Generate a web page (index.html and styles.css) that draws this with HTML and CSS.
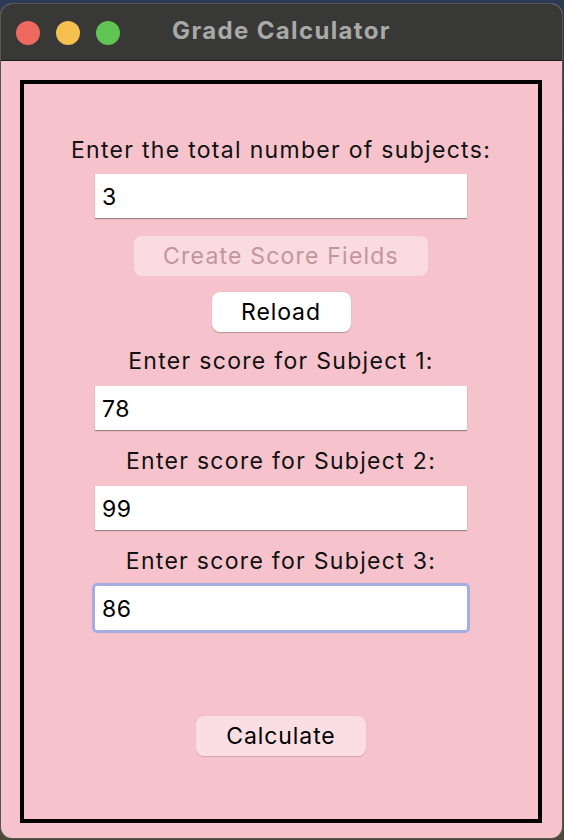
FILE: index.html
```html
<!DOCTYPE html>
<html>
<head>
<meta charset="utf-8">
<link rel="stylesheet" href="styles.css">
</head>
<body>
<div class="desktop">
  <div class="window">
    <div class="titlebar">
      <div class="lights">
        <span class="light red"></span>
        <span class="light yellow"></span>
        <span class="light green"></span>
      </div>
      <div class="title">Grade Calculator</div>
    </div>
    <div class="content">
      <div class="frame">
        <div class="label l1">Enter the total number of subjects:</div>
        <div class="field f1">3</div>
        <div class="btn btn-disabled">Create Score Fields</div>
        <div class="btn btn-white">Reload</div>
        <div class="label l2">Enter score for Subject 1:</div>
        <div class="field f2">78</div>
        <div class="label l3">Enter score for Subject 2:</div>
        <div class="field f2">99</div>
        <div class="label l3">Enter score for Subject 3:</div>
        <div class="field f3 focused">86</div>
        <div class="btn btn-calc">Calculate</div>
      </div>
    </div>
  </div>
</div>
</body>
</html>
```
FILE: styles.css
```css
html, body {
  margin: 0;
  padding: 0;
}
body {
  width: 564px;
  height: 840px;
  overflow: hidden;
  font-family: Inter, "Liberation Sans", sans-serif;
}
.desktop {
  width: 564px;
  height: 840px;
  background: linear-gradient(180deg, #2c3b55 0%, #3a4660 40%, #4a4a36 100%);
  padding-top: 4px;
  padding-left: 1px;
  box-sizing: border-box;
}
.window {
  width: 561px;
  height: 834px;
  border-radius: 11px;
  overflow: hidden;
  background: #f6c3cc;
  box-shadow: 0 0 0 1px #555;
}
.titlebar {
  height: 56px;
  background: #383836;
  border-bottom: 1px solid #1c1c1c;
  display: flex;
  align-items: center;
  position: relative;
}
.lights {
  display: flex;
  gap: 16px;
  padding-left: 15px;
  margin-top: 1px;
}
.light {
  width: 24px;
  height: 24px;
  border-radius: 50%;
  display: block;
}
.red { background: #ee6a5f; }
.yellow { background: #f5c04f; }
.green { background: #61c554; }
.title {
  position: absolute;
  left: 0;
  right: 0;
  top: 0;
  height: 56px;
  line-height: 54px;
  text-align: center;
  color: #a9a9a7;
  font-weight: 700;
  font-size: 24px;
  letter-spacing: 1.35px;
}
.content {
  padding: 19px 0 0 19px;
}
.frame {
  width: 522px;
  height: 743px;
  border: 4px solid #000;
  display: flex;
  flex-direction: column;
  align-items: center;
  padding-top: 51px;
  box-sizing: border-box;
}
.label {
  height: 30px;
  line-height: 30px;
  font-size: 23px;
  letter-spacing: 1.3px;
  color: #111;
  white-space: nowrap;
}
.field {
  width: 372px;
  height: 44px;
  background: #fff;
  box-shadow: 0 1px 1px rgba(0,0,0,0.35);
  font-size: 23px;
  line-height: 46px;
  padding-left: 7px;
  box-sizing: border-box;
  color: #000;
  letter-spacing: 0.6px;
}
.f1 { margin-top: 9px; }
.l2 { margin-top: 14px; }
.l3 { margin-top: 16px; }
.f2, .f3 { margin-top: 10px; }
.focused {
  border-radius: 2px;
  box-shadow: 0 0 0 3px #a3aee2, 0 1px 1px rgba(0,0,0,0.3);
}
.btn {
  height: 40px;
  line-height: 40px;
  border-radius: 8px;
  font-size: 23px;
  letter-spacing: 0.9px;
  text-align: center;
  box-sizing: border-box;
  white-space: nowrap;
}
.btn-disabled {
  margin-top: 18px;
  width: 294px;
  background: #f9dbe1;
  color: #c4959d;
  letter-spacing: 1.2px;
}
.btn-white {
  margin-top: 16px;
  width: 139px;
  background: #fff;
  color: #000;
  box-shadow: 0 0.5px 1px rgba(0,0,0,0.25);
}
.btn-calc {
  margin-top: 86px;
  width: 170px;
  background: #fbdee3;
  color: #000;
  box-shadow: 0 0.5px 1px rgba(0,0,0,0.15);
}
```
